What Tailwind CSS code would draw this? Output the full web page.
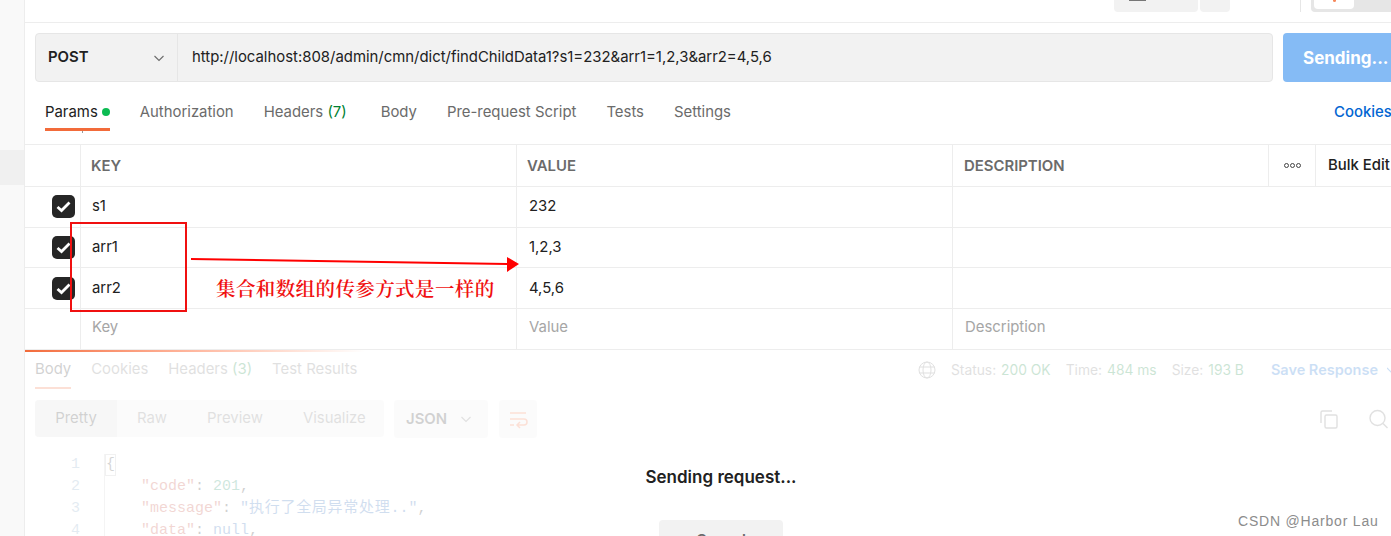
<!DOCTYPE html>
<html><head><meta charset="utf-8">
<script src="https://cdn.jsdelivr.net/npm/@tailwindcss/browser@4"></script>
</head>
<body class="m-0 bg-white overflow-hidden">
<div class="relative flex w-[1391px] h-[536px] overflow-hidden font-['Inter','Noto_Sans_CJK_SC',sans-serif] text-[14.9px] text-[#212121]">
  <!-- sidebar -->
  <aside class="w-[24px] shrink-0 bg-[#f9f9f9] border-r border-[#ededed] box-content pt-[150px]">
    <div class="h-[35px] bg-[#f0f0f0]"></div>
  </aside>
  <main class="relative flex-1 min-w-0 flex flex-col">
    <!-- top bar -->
    <div class="h-[23px] shrink-0 border-b border-[#ededed] flex items-start justify-end">
      <div class="w-[84px] h-[12px] bg-[#f2f2f2] rounded-b-[4px] pl-[15px]"><div class="w-[17px] h-[1px] bg-[#777]"></div></div>
      <div class="ml-[2px] w-[30px] h-[12px] bg-[#f2f2f2] rounded-b-[4px]"></div>
      <div class="ml-[70px] w-[1px] h-[12px] bg-[#e6e6e6]"></div>
      <div class="ml-[10px] w-[80px] h-[12px] bg-[#e6e6e6] rounded-bl-[4px] pl-[3px] flex items-start">
        <div class="w-[40px] h-[9px] bg-white rounded-b-[4px] flex justify-center"><div class="w-[3px] h-[2px] rounded-b-full bg-[#f6885a]"></div></div>
      </div>
    </div>
    <!-- url row -->
    <div class="mt-[10px] ml-[10px] flex gap-[10px] h-[49px] shrink-0">
      <div class="w-[1238px] shrink-0 flex bg-[#f2f2f2] border border-[#e6e6e6] rounded-[4px]">
        <div class="w-[142px] shrink-0 flex items-center justify-between pl-[12px] pr-[12px] border-r border-[#e6e6e6]">
          <span class="font-semibold text-[#212121]">POST</span>
          <svg class="w-[12px] h-[12px]" viewBox="0 0 12 12" fill="none" stroke="#6b6b6b" stroke-width="1.1"><path d="M1.500 4l4.500 4.500L10.500 4"/></svg>
        </div>
        <div class="flex-1 flex items-center pl-[14px] text-[#212121] whitespace-nowrap">http://localhost:808/admin/cmn/dict/findChildData1?s1=232&amp;arr1=1,2,3&amp;arr2=4,5,6</div>
      </div>
      <div class="w-[120px] shrink-0 bg-[#85bbf5] rounded-[4px] flex items-center pl-[20px] pt-[2px] text-white font-bold text-[17px]">Sending...</div>
    </div>
    <!-- tabs -->
    <div class="relative h-[62px] shrink-0 flex items-start pl-[20px] pt-[19px] gap-[30px] text-[#6b6b6b] whitespace-nowrap">
      <div class="relative flex items-start text-[#212121]">
        <span>Params</span><span class="ml-[4px] mt-[7px] w-[8px] h-[8px] rounded-full bg-[#0cbb52]"></span>
        <div class="absolute left-0 right-0 top-[27px] h-[3px] bg-[#f26b3a]"></div>
        <div class="absolute left-[37px] top-[30px] w-[1px] h-[2px] bg-[#999]"></div>
      </div>
      <span>Authorization</span>
      <span>Headers <span class="text-[#007f31]">(7)</span></span>
      <span class="ml-[4px]">Body</span>
      <span>Pre-request Script</span>
      <span>Tests</span>
      <span>Settings</span>
      <span class="absolute left-[1309px] top-[19px] text-[#0265d2] font-medium">Cookies</span>
    </div>
    <!-- params table -->
    <div class="shrink-0 grid grid-cols-[56px_436px_436px_1fr] border-t border-[#ededed]">
      <div class="h-[42px] border-b border-r border-[#ededed]"></div>
      <div class="h-[42px] border-b border-r border-[#ededed] flex items-center pl-[10px] pt-[1px] font-semibold text-[#6b6b6b]">KEY</div>
      <div class="h-[42px] border-b border-r border-[#ededed] flex items-center pl-[10px] pt-[1px] font-semibold text-[#6b6b6b]">VALUE</div>
      <div class="h-[42px] border-b border-[#ededed] flex items-center">
        <div class="w-[316px] h-full border-r border-[#ededed] flex items-center pl-[11px] pt-[1px] font-semibold text-[#6b6b6b]">DESCRIPTION</div>
        <div class="w-[47px] h-full border-r border-[#ededed] flex items-center justify-center gap-[1px]">
          <span class="w-[5px] h-[5px] rounded-full border border-[#444]"></span><span class="w-[5px] h-[5px] rounded-full border border-[#444]"></span><span class="w-[5px] h-[5px] rounded-full border border-[#444]"></span>
        </div>
        <div class="pl-[12px] font-medium whitespace-nowrap">Bulk Edit</div>
      </div>

      <div class="h-[41px] border-b border-r border-[#ededed] flex items-center justify-end pr-[5px] pb-[2px]">
        <div class="w-[23px] h-[23px] rounded-[5px] bg-[#262626] flex items-center justify-center"><svg class="w-[15px] h-[15px]" viewBox="0 0 15 15" fill="none" stroke="#fff" stroke-width="2.800"><path d="M1.500 8l4 3.500 8-8"/></svg></div>
      </div>
      <div class="h-[41px] border-b border-r border-[#ededed] flex items-center pl-[11px] pb-[2px]">s1</div>
      <div class="h-[41px] border-b border-r border-[#ededed] flex items-center pl-[12px] pb-[2px]">232</div>
      <div class="h-[41px] border-b border-[#ededed]"></div>

      <div class="h-[40px] border-b border-r border-[#ededed] flex items-center justify-end pr-[5px]">
        <div class="w-[23px] h-[23px] rounded-[5px] bg-[#262626] flex items-center justify-center"><svg class="w-[15px] h-[15px]" viewBox="0 0 15 15" fill="none" stroke="#fff" stroke-width="2.800"><path d="M1.500 8l4 3.500 8-8"/></svg></div>
      </div>
      <div class="h-[40px] border-b border-r border-[#ededed] flex items-center pl-[11px] pb-[1px]">arr1</div>
      <div class="h-[40px] border-b border-r border-[#ededed] flex items-center pl-[12px] pb-[1px]">1,2,3</div>
      <div class="h-[40px] border-b border-[#ededed]"></div>

      <div class="h-[41px] border-b border-r border-[#ededed] flex items-center justify-end pr-[5px]">
        <div class="w-[23px] h-[23px] rounded-[5px] bg-[#262626] flex items-center justify-center"><svg class="w-[15px] h-[15px]" viewBox="0 0 15 15" fill="none" stroke="#fff" stroke-width="2.800"><path d="M1.500 8l4 3.500 8-8"/></svg></div>
      </div>
      <div class="h-[41px] border-b border-r border-[#ededed] flex items-center pl-[11px]">arr2</div>
      <div class="h-[41px] border-b border-r border-[#ededed] flex items-center pl-[12px]">4,5,6</div>
      <div class="h-[41px] border-b border-[#ededed]"></div>

      <div class="h-[40px] border-r border-[#ededed]"></div>
      <div class="h-[40px] border-r border-[#ededed] flex items-center pl-[11px] pb-[3px] text-[#a6a6a6]">Key</div>
      <div class="h-[40px] border-r border-[#ededed] flex items-center pl-[12px] pb-[3px] text-[#a6a6a6]">Value</div>
      <div class="h-[40px] flex items-center pl-[12px] pb-[3px] text-[#a6a6a6]">Description</div>
    </div>
    <!-- response -->
    <div class="relative flex-1 min-h-0 border-t border-[#ededed]">
      <div class="absolute left-0 top-0 w-[340px] h-[2px] bg-gradient-to-r from-[#f26b3a] to-white"></div>
      <div class="opacity-20">
        <div class="relative h-[50px] pl-[10px] pt-[8px] flex items-start gap-[20px] whitespace-nowrap text-[#6b6b6b]">
          <div class="relative text-[#212121]">Body<div class="absolute left-0 right-0 top-[29px] h-[2px] bg-[#f26b3a]"></div></div>
          <span>Cookies</span>
          <span>Headers <span class="text-[#007f31]">(3)</span></span>
          <span>Test Results</span>
          <div class="absolute right-0 top-[10px] w-[473px] flex items-center text-[13.800px] h-[20px] whitespace-nowrap">
            <svg class="w-[18px] h-[18px] shrink-0" viewBox="0 0 18 18" fill="none" stroke="#6b6b6b"><circle cx="9" cy="9" r="8"/><ellipse cx="9" cy="9" rx="4" ry="8"/><path d="M1.500 6h15M1.500 12h15"/></svg>
            <span class="ml-[15px]">Status:</span><span class="ml-[5px] text-[#007f31]">200 OK</span>
            <span class="ml-[15px]">Time:</span><span class="ml-[5px] text-[#007f31]">484 ms</span>
            <span class="ml-[15px]">Size:</span><span class="ml-[5px] text-[#007f31]">193 B</span>
            <span class="ml-[9px] w-[1px] h-[20px] bg-[#ccc]"></span>
            <span class="ml-[18px] text-[#0265d2] font-semibold text-[14.500px]">Save Response</span>
            <svg class="ml-[9px] w-[8px] h-[8px] shrink-0" viewBox="0 0 8 8" fill="none" stroke="#0265d2" stroke-width="1.200"><path d="M0 2l4 4 4-4"/></svg>
          </div>
        </div>
        <div class="relative h-[38px] ml-[10px] flex items-start">
          <div class="w-[349px] h-[37px] bg-[#ededed] rounded-[4px] flex items-center whitespace-nowrap text-[#6b6b6b]">
            <div class="w-[82px] h-full bg-[#dcdcdc] rounded-l-[4px] flex items-center justify-center text-[#212121]">Pretty</div>
            <span class="ml-[20px]">Raw</span><span class="ml-[40px]">Preview</span><span class="ml-[40px]">Visualize</span>
          </div>
          <div class="ml-[10px] w-[94px] h-[38px] bg-[#ededed] rounded-[4px] flex items-center justify-between pl-[12px] pr-[16px] font-semibold text-[#212121]">JSON
            <svg class="w-[12px] h-[12px]" viewBox="0 0 12 12" fill="none" stroke="#6b6b6b" stroke-width="1.200"><path d="M1.500 4l4.500 4.500L10.500 4"/></svg>
          </div>
          <div class="ml-[11px] w-[38px] h-[38px] bg-[#ededed] rounded-[4px] flex items-center justify-center">
            <svg class="w-[20px] h-[20px]" viewBox="0 0 20 20" fill="none" stroke="#f26b3a" stroke-width="1.500"><path d="M2 4h16M2 10h14a2.500 2.500 0 010 6h-6M12 13l-3 3 3 3M2 16h4"/></svg>
          </div>
          <svg class="absolute left-[1284px] top-[9px] w-[20px] h-[20px]" viewBox="0 0 20 20" fill="none" stroke="#6b6b6b" stroke-width="1.400"><rect x="6" y="6" width="12" height="13" rx="1.500"/><path d="M13 2H3.500A1.500 1.500 0 002 3.500V14"/></svg>
          <svg class="absolute left-[1334px] top-[9px] w-[19px] h-[20px]" viewBox="0 0 19 20" fill="none" stroke="#6b6b6b" stroke-width="1.400"><circle cx="8.500" cy="9" r="7.500"/><path d="M14 14.500l4.500 4.500"/></svg>
        </div>
        <div class="relative mt-[16px] font-['Liberation_Mono','Noto_Sans_CJK_SC',monospace] text-[15px] leading-[22px]">
          <div class="absolute left-[79px] top-0 h-[90px] w-[1px] bg-[#ccc]"></div>
          <div class="flex"><span class="w-[55px] text-right text-[#7aa0c0]">1</span><span class="ml-[25px] text-[#333] border border-[#bbb] leading-[20px] h-[22px]">{</span></div>
          <div class="flex"><span class="w-[55px] text-right text-[#7aa0c0]">2</span><span class="ml-[25px] whitespace-pre">    <span class="text-[#c0392b]">"code"</span>: <span class="text-[#0f8a5f]">201</span>,</span></div>
          <div class="flex"><span class="w-[55px] text-right text-[#7aa0c0]">3</span><span class="ml-[25px] whitespace-pre">    <span class="text-[#c0392b]">"message"</span>: <span class="text-[#1a5fb4]">"<span class="tracking-[0.700px]">执行了全局异常处理</span>.."</span>,</span></div>
          <div class="flex"><span class="w-[55px] text-right text-[#7aa0c0]">4</span><span class="ml-[25px] whitespace-pre">    <span class="text-[#c0392b]">"data"</span>: <span class="text-[#1a5fb4]">null</span>,</span></div>
        </div>
      </div>
      <!-- sending overlay -->
      <div class="absolute left-[560px] top-[115px] w-[272px] flex flex-col items-center">
        <div class="font-semibold text-[17px] text-[#212121] leading-[24px]">Sending request...</div>
        <div class="mt-[31px] w-[124px] h-[40px] bg-[#f2f2f2] rounded-[4px] flex items-center justify-center font-semibold text-[#6b6b6b]">Cancel</div>
      </div>
    </div>
  </main>
  <!-- annotation -->
  <div class="absolute left-[70px] top-[222px] w-[117px] h-[90px] border-2 border-[#f01010] pointer-events-none"></div>
  <svg class="absolute left-[190px] top-[250px] w-[332px] h-[24px]" viewBox="0 0 332 24" fill="none"><path d="M1 9l316 5" stroke="#f00" stroke-width="2"/><path d="M317 7l12 7-12 8z" fill="#f00"/></svg>
  <div class="absolute left-[216px] top-[276px] text-[#f01010] text-[19.500px] leading-[24px] tracking-[0.400px] font-semibold whitespace-nowrap font-['Noto_Serif_CJK_SC','Noto_Sans_CJK_SC',serif]">集合和数组的传参方式是一样的</div>
  <div class="absolute left-[1238px] top-[511px] text-[#8c8c8c] text-[14px] leading-[20px] font-['Liberation_Sans',sans-serif] tracking-[0.8px] whitespace-nowrap">CSDN @Harbor Lau</div>
</div>
</body></html>
